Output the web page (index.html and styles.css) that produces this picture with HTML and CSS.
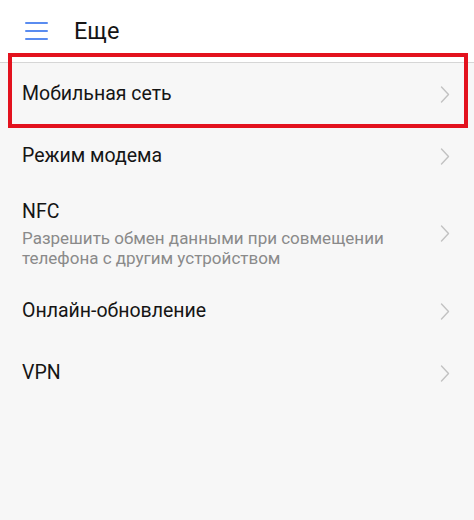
FILE: index.html
```html
<!DOCTYPE html>
<html lang="ru">
<head>
<meta charset="utf-8">
<title>Еще</title>
<link rel="stylesheet" href="styles.css">
</head>
<body>
<div class="screen">
  <header class="topbar">
    <span class="menu" aria-label="Меню"><i></i><i></i><i></i></span>
    <h1 class="title">Еще</h1>
  </header>
  <ul class="list">
    <li class="row">
      <div class="text"><div class="label">Мобильная сеть</div></div>
      <svg class="chev" width="10" height="17" viewBox="0 0 10 17"><polyline points="1.5,1 8.5,8.5 1.5,16" /></svg>
    </li>
    <li class="row">
      <div class="text"><div class="label">Режим модема</div></div>
      <svg class="chev" width="10" height="17" viewBox="0 0 10 17"><polyline points="1.5,1 8.5,8.5 1.5,16" /></svg>
    </li>
    <li class="row row-tall">
      <div class="text">
        <div class="label">NFC</div>
        <div class="sub">Разрешить обмен данными при совмещении телефона с другим устройством</div>
      </div>
      <svg class="chev" width="10" height="17" viewBox="0 0 10 17"><polyline points="1.5,1 8.5,8.5 1.5,16" /></svg>
    </li>
    <li class="row">
      <div class="text"><div class="label">Онлайн-обновление</div></div>
      <svg class="chev" width="10" height="17" viewBox="0 0 10 17"><polyline points="1.5,1 8.5,8.5 1.5,16" /></svg>
    </li>
    <li class="row">
      <div class="text"><div class="label">VPN</div></div>
      <svg class="chev" width="10" height="17" viewBox="0 0 10 17"><polyline points="1.5,1 8.5,8.5 1.5,16" /></svg>
    </li>
  </ul>
  <div class="highlight"></div>
</div>
</body>
</html>
```

FILE: styles.css
```css
html, body {
  margin: 0;
  padding: 0;
  background: #f7f7f7;
}
body {
  font-family: Roboto, "Noto Sans", "Liberation Sans", sans-serif;
  color: #151515;
}
.screen {
  position: relative;
  width: 474px;
  min-height: 520px;
  background: #f7f7f7;
}
.topbar {
  height: 62px;
  background: #ffffff;
  border-bottom: 1px solid #d6d6d6;
  display: flex;
  align-items: center;
  padding-left: 25px;
  box-sizing: content-box;
}
.menu {
  width: 23px;
  height: 18px;
  display: flex;
  flex-direction: column;
  justify-content: space-between;
  margin-right: 26px;
}
.menu i {
  display: block;
  height: 2px;
  background: #5a8cf0;
  border-radius: 1px;
}
.title {
  margin: 0;
  font-size: 23.5px;
  font-weight: 400;
  line-height: 26px;
  color: #151515;
}
.list {
  list-style: none;
  margin: 0;
  padding: 0;
}
.row {
  height: 62px;
  display: flex;
  align-items: center;
  padding: 0 24px 0 22px;
}
.row-tall {
  height: 93px;
}
.text {
  flex: 1;
  min-width: 0;
}
.label {
  font-size: 19.5px;
  line-height: 24px;
  color: #151515;
}
.sub {
  font-size: 17px;
  line-height: 20px;
  color: #8a8a8a;
  margin-top: 4px;
  padding-right: 30px;
}
.chev {
  flex: none;
  fill: none;
  stroke: #c2c2c2;
  stroke-width: 1.4;
  stroke-linecap: round;
  stroke-linejoin: round;
}
.highlight {
  position: absolute;
  left: 8px;
  top: 53px;
  width: 460px;
  height: 75px;
  box-sizing: border-box;
  border: 4px solid #e3121e;
  pointer-events: none;
}
```
